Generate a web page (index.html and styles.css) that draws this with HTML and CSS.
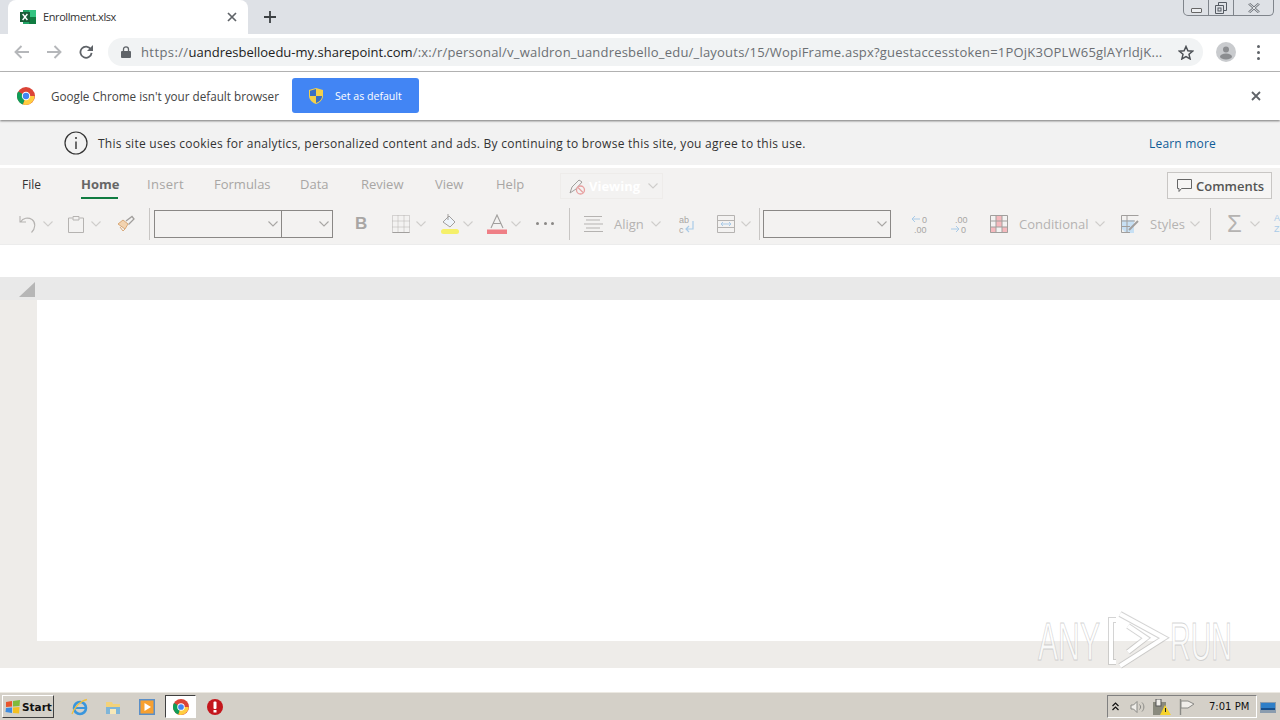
FILE: index.html
```html
<!DOCTYPE html>
<html lang="en">
<head>
    <meta charset="UTF-8">
    <title>Enrollment.xlsx</title>
    <link rel="stylesheet" href="styles.css">
</head>
<body>
    <svg class="defs" width="0" height="0">
        <symbol id="chev" viewBox="0 0 10 6"><path d="M.5.5 5 5 9.5.5" fill="none" stroke="#cfcdcb" stroke-width="1.100"/></symbol>
        <symbol id="chevd" viewBox="0 0 10 6"><path d="M.5.5 5 5 9.5.5" fill="none" stroke="#a8a6a4" stroke-width="1.100"/></symbol>
    </svg>

    <div class="tabstrip">
        <div class="tab">
            <svg class="tab-icon" width="16" height="16" viewBox="0 0 16 16"><rect x="3" y="1" width="13" height="14" fill="#21a366"/><rect x="9" y="1" width="7" height="7" fill="#33c481"/><rect x="9" y="8" width="7" height="7" fill="#107c41"/><rect y="3" width="10" height="10" fill="#185c37"/><path d="M2.600 5 7.400 11M7.400 5 2.600 11" stroke="#fff" stroke-width="1.400"/></svg>
            <span class="tab-title">Enrollment.xlsx</span>
            <svg width="10" height="10" viewBox="0 0 10 10"><path d="M1 1 9 9M9 1 1 9" stroke="#5f6368" stroke-width="1.700"/></svg>
        </div>
        <svg class="newtab" width="12" height="12" viewBox="0 0 12 12"><path d="M6 0V12M0 6H12" stroke="#3c4043" stroke-width="1.800"/></svg>
        <div class="winctl">
            <div class="win-btn win-min"><span class="min-bar"></span></div>
            <div class="win-btn win-max">
                <svg width="12" height="12" viewBox="0 0 12 12"><path d="M3.500 3V.5H11.500V8.500H9M.5 3.500H8.500V11.500H.5Z" fill="none" stroke="#555b63"/><rect x="3" y="6" width="3" height="3" fill="none" stroke="#555b63"/></svg>
            </div>
            <div class="win-btn win-close">
                <svg width="12" height="10" viewBox="0 0 12 10"><path d="M1 .5 11 9.500M11 .5 1 9.500" stroke="#70757c" stroke-width="2.400"/><path d="M1 .5 11 9.500M11 .5 1 9.500" stroke="#e6e8ec" stroke-width="1"/></svg>
            </div>
        </div>
    </div>

    <div class="toolbar">
        <svg class="nav-back" width="16" height="14" viewBox="0 0 16 14"><path d="M15 7H2M7.500 1 1.500 7l6 6" fill="none" stroke="#b5b7ba" stroke-width="1.900"/></svg>
        <svg class="nav-fwd" width="16" height="14" viewBox="0 0 16 14"><path d="M1 7H14M8.500 1l6 6-6 6" fill="none" stroke="#b5b7ba" stroke-width="1.900"/></svg>
        <svg class="nav-reload" width="14" height="14" viewBox="0 0 14 14"><path d="M11.800 4.200A5.600 5.600 0 1 0 12.600 7.800" fill="none" stroke="#5f6368" stroke-width="1.800"/><path d="M14 0V6H8Z" fill="#5f6368"/></svg>
        <div class="omnibox">
            <svg class="lock" width="10" height="12" viewBox="0 0 10 12"><path d="M2.500 5V3.300a2.500 2.500 0 0 1 5 0V5" fill="none" stroke="#5f6368" stroke-width="1.300"/><rect y="5" width="10" height="7" rx="1" fill="#5f6368"/></svg>
            <div class="url"><span class="url-scheme">https://</span><span class="url-host">uandresbelloedu-my.sharepoint.com</span><span class="url-dim">/:x:/r/personal/v_waldron_uandresbello_edu/_layouts/15/WopiFrame.aspx?guestaccesstoken=1POjK3OPLW65glAYrldjK...</span></div>
            <svg class="star" width="16" height="15" viewBox="0 0 16 15"><path d="M8 1.500 9.900 5.800 14.600 6.200 11 9.300 12.100 13.900 8 11.500 3.900 13.900 5 9.300 1.400 6.200 6.100 5.800Z" fill="none" stroke="#4c5055" stroke-width="1.500"/></svg>
        </div>
        <svg class="avatar" width="20" height="20" viewBox="0 0 20 20"><circle cx="10" cy="10" r="10" fill="#c9cbce"/><circle cx="10" cy="7.500" r="3" fill="#8b8d90"/><ellipse cx="10" cy="14.500" rx="6" ry="3" fill="#8b8d90"/></svg>
        <div class="kebab"><i></i><i></i><i></i></div>
    </div>

    <div class="infobar">
        <svg class="chrome-logo" width="18" height="18" viewBox="0 0 18 18"><circle cx="9" cy="9" r="9" fill="#db4437"/><path d="M9 9 1.200 4.500A9 9 0 0 0 6 17.500Z" fill="#0f9d58"/><path d="M9 9H17.600A9 9 0 0 1 6 17.500Z" fill="#ffcd40"/><circle cx="9" cy="9" r="4.200" fill="#fff"/><circle cx="9" cy="9" r="3.200" fill="#4285f4"/></svg>
        <span class="infobar-text">Google Chrome isn't your default browser</span>
        <div class="default-btn">
            <svg width="14" height="16" viewBox="0 0 14 16"><path d="M7 0 14 2V8C14 12 10 15 7 16 4 15 0 12 0 8V2Z" fill="#f4d04a"/><path d="M7 1V8H1V2.700ZM7 8H13C13 11.500 10 14 7 15Z" fill="#3a6fc4"/></svg>
            <span>Set as default</span>
        </div>
        <svg class="infobar-close" width="10" height="10" viewBox="0 0 10 10"><path d="M1 1 9 9M9 1 1 9" stroke="#5f6368" stroke-width="1.800"/></svg>
    </div>

    <div class="cookiebar">
        <svg width="24" height="24" viewBox="0 0 24 24"><circle cx="12" cy="12" r="11" fill="none" stroke="#333" stroke-width="1.200"/><path d="M12 10.500V18" stroke="#333" stroke-width="1.400"/><circle cx="12" cy="7" r="1" fill="#333"/></svg>
        <span class="cookie-text">This site uses cookies for analytics, personalized content and ads. By continuing to browse this site, you agree to this use.</span>
        <span class="learn-more">Learn more</span>
    </div>

    <div class="ribbon">
        <div class="ribbon-tabs">
            <span class="rtab rtab-file">File</span>
            <span class="rtab rtab-home">Home</span>
            <span class="rtab rtab-insert">Insert</span>
            <span class="rtab rtab-formulas">Formulas</span>
            <span class="rtab rtab-data">Data</span>
            <span class="rtab rtab-review">Review</span>
            <span class="rtab rtab-view">View</span>
            <span class="rtab rtab-help">Help</span>
            <div class="viewing">
                <svg width="17" height="17" viewBox="0 0 17 17"><path d="M1 15 3 9 10 2 13 4 7 11Z" fill="none" stroke="#a19f9d"/><circle cx="11.500" cy="12" r="4" fill="#f3f2f1" stroke="#e8a0a0" stroke-width="1.300"/><path d="M9 9.500 14 14.500" stroke="#e8a0a0" stroke-width="1.200"/></svg>
                <span class="viewing-text">Viewing</span>
                <svg width="10" height="6"><use href="#chev"/></svg>
            </div>
            <div class="comments">
                <svg width="15" height="15" viewBox="0 0 15 15"><path d="M.5 1.500H14.500V10.500H4.500L2 13.500V10.500H.5Z" fill="none" stroke="#666"/></svg>
                <span>Comments</span>
            </div>
        </div>
        <div class="ribbon-tools">
            <svg width="18" height="20" viewBox="0 0 18 20"><path d="M1 2V8H7M1.500 8C4 4 9 3 13 5.500c4 3 3.500 9-.5 13" fill="none" stroke="#b5b3b1" stroke-width="1.100"/></svg>
            <svg class="ml6" width="10" height="6"><use href="#chev"/></svg>
            <svg class="ml15" width="16" height="18" viewBox="0 0 16 18"><path d="M4.500 3H.5V17.500H15.500V3H11.500M5 1.500H11V5H5Z" fill="none" stroke="#b5b3b1"/></svg>
            <svg class="ml7" width="10" height="6"><use href="#chev"/></svg>
            <svg class="ml16" width="18" height="18" viewBox="0 0 18 18"><path d="M1 9 8 14 11 9 6 5Z" fill="#f2d3b0" stroke="#d8a878"/><path d="M9 6 15 1.500 17 4 11.500 9.500" fill="none" stroke="#a19f9d" stroke-width="1.300"/><path d="M3 12 6 16 8 14" fill="none" stroke="#d8a878"/></svg>
            <span class="sep ml14"></span>
            <div class="combo combo-font ml4"><svg width="10" height="6"><use href="#chevd"/></svg></div>
            <div class="combo combo-size"><svg width="10" height="6"><use href="#chevd"/></svg></div>
            <span class="bold-b ml22">B</span>
            <svg class="ml25" width="18" height="18" viewBox="0 0 18 18"><path d="M.5.5H17.500V17.500H.5ZM6 .5V17.500M12 .5V17.500M.5 6H17.500M.5 12H17.500" fill="none" stroke="#b5b3b1" stroke-dasharray="1 1"/><path d="M.5 17.500H17.500" stroke="#a19f9d"/></svg>
            <svg class="ml6" width="10" height="6"><use href="#chev"/></svg>
            <svg class="ml15" width="18" height="20" viewBox="0 0 18 20"><path d="M2 8 8 2 14 8 9 13Z" fill="#eef4fa" stroke="#a19f9d"/><path d="M7 0V6" stroke="#a19f9d"/><rect y="15" width="18" height="5" rx="2.500" fill="#f5f06a"/></svg>
            <svg class="ml4" width="10" height="6"><use href="#chev"/></svg>
            <svg class="ml14" width="20" height="20" viewBox="0 0 20 20"><path d="M4 14 10 1 16 14M6.500 9.500H13.500" fill="none" stroke="#a19f9d" stroke-width="1.100"/><rect y="15.500" width="20" height="4.500" fill="#ef7f86"/></svg>
            <svg class="ml4" width="10" height="6"><use href="#chev"/></svg>
            <div class="dots ml15"><i></i><i></i><i></i></div>
            <span class="sep ml15"></span>
            <svg class="ml14" width="19" height="18" viewBox="0 0 19 18"><path d="M0 1.500H18M2 5H16M0 9H19M2 13H16M0 16.500H19" stroke="#b5b3b1"/></svg>
            <span class="tool-text text-align ml11">Align</span>
            <svg class="ml6" width="10" height="6"><use href="#chev"/></svg>
            <svg class="ml17" width="17" height="20" viewBox="0 0 17 20"><text x="1" y="8.500" class="svg-small">ab</text><text x="1" y="18.500" class="svg-small">c</text><path d="M15 7V15H8M11 12 8 15 11 18" fill="none" stroke="#a9cbe8" stroke-width="1.200"/></svg>
            <svg class="ml22" width="18" height="18" viewBox="0 0 18 18"><path d="M.5.5H17.500V17.500H.5ZM.5 5.500H17.500M.5 12.500H17.500" fill="none" stroke="#b5b3b1"/><path d="M4 9H14M4 9 6 7M4 9 6 11M14 9 12 7M14 9 12 11" fill="none" stroke="#a9cbe8"/></svg>
            <svg class="ml6" width="10" height="6"><use href="#chev"/></svg>
            <span class="sep ml8"></span>
            <div class="combo combo-num ml3"><svg width="10" height="6"><use href="#chevd"/></svg></div>
            <svg class="ml20" width="18" height="20" viewBox="0 0 18 20"><path d="M9 5H1M4 2 1 5 4 8" fill="none" stroke="#a9cbe8"/><text x="11" y="8.500" class="svg-small">0</text><text x="3" y="18.500" class="svg-small">.00</text></svg>
            <svg class="ml21" width="19" height="20" viewBox="0 0 19 20"><text x="5" y="8.500" class="svg-small">.00</text><path d="M1 15H9M6 12 9 15 6 18" fill="none" stroke="#a9cbe8"/><text x="11" y="18.500" class="svg-small">0</text></svg>
            <svg class="ml21" width="18" height="18" viewBox="0 0 18 18"><rect x="6" y="6" width="6" height="6" fill="#f5b9bd"/><rect y="12" width="6" height="6" fill="#f5b9bd"/><rect x="12" y="12" width="6" height="6" fill="#f5b9bd"/><rect x="6" y="0" width="6" height="6" fill="#f5b9bd"/><path d="M.5.5H17.500V17.500H.5ZM6 .5V17.500M12 .5V17.500M.5 6H17.500M.5 12H17.500" fill="none" stroke="#a19f9d"/></svg>
            <span class="tool-text text-cond ml11">Conditional</span>
            <svg class="ml6" width="10" height="6"><use href="#chev"/></svg>
            <svg class="ml16" width="19" height="18" viewBox="0 0 19 18"><path d="M0 5H13V18H5L0 13Z" fill="#c7e0f4"/><path d="M.5.5H17.500M.5.5V17.500H9M.5 6H14M6 .5V17M.5 11.500H9" fill="none" stroke="#a19f9d"/><path d="M8 15 17 6" stroke="#a19f9d" stroke-width="2"/></svg>
            <span class="tool-text text-styles ml10">Styles</span>
            <svg class="ml5" width="10" height="6"><use href="#chev"/></svg>
            <span class="sep ml10"></span>
            <span class="sigma ml16">&Sigma;</span>
            <svg class="ml7" width="10" height="6"><use href="#chev"/></svg>
            <div class="sort ml14"><span>A</span><span>Z</span></div>
        </div>
    </div>

    <div class="formula-gap"></div>
    <div class="col-header">
        <div class="corner"><span class="corner-tri"></span></div>
    </div>
    <div class="sheet">
        <div class="row-header"></div>
        <div class="cells"></div>
    </div>
    <div class="sheet-tabs"></div>
    <div class="status-gap"></div>

    <div class="taskbar">
        <div class="start">
            <svg width="16" height="16" viewBox="0 0 16 16"><path d="M1 3 7 2V7.500L1 8Z" fill="#e8552d"/><path d="M8 2 15 1 14.500 7 8 7.500Z" fill="#7fba3c"/><path d="M1 9 7 8.500V14L.5 13Z" fill="#3d8be0"/><path d="M8 8.500 14.500 8 14 14.500 8 14Z" fill="#f4c020"/></svg>
            <span>Start</span>
        </div>
        <svg class="tb-ie" width="18" height="18" viewBox="0 0 18 18"><circle cx="9" cy="10" r="6" fill="none" stroke="#3a96dd" stroke-width="2.600"/><path d="M4 10H14" stroke="#3a96dd" stroke-width="2"/><path d="M1 16C3 10 9 3 16 1.500" fill="none" stroke="#f0c040" stroke-width="1.300"/></svg>
        <svg class="tb-folder" width="16" height="16" viewBox="0 0 16 16"><path d="M1 3H7L8 5H15V15H1Z" fill="#f3d27a"/><rect x="1" y="8" width="14" height="7" fill="#7fb5d8"/><rect x="5" y="10" width="6" height="5" fill="#f7e8b8"/></svg>
        <svg class="tb-wmp" width="16" height="16" viewBox="0 0 16 16"><rect width="16" height="16" fill="#5a8fc8"/><rect x="1.500" y="1.500" width="13" height="13" fill="#f7a030"/><path d="M5.500 4 12 8 5.500 12Z" fill="#fff"/></svg>
        <div class="tb-active">
            <svg width="16" height="16" viewBox="0 0 18 18"><circle cx="9" cy="9" r="9" fill="#db4437"/><path d="M9 9 1.200 4.500A9 9 0 0 0 6 17.500Z" fill="#0f9d58"/><path d="M9 9H17.600A9 9 0 0 1 6 17.500Z" fill="#ffcd40"/><circle cx="9" cy="9" r="4.200" fill="#fff"/><circle cx="9" cy="9" r="3.200" fill="#4285f4"/></svg>
        </div>
        <svg class="tb-red" width="16" height="16" viewBox="0 0 16 16"><circle cx="8" cy="8" r="8" fill="#c4161c"/><rect x="6.500" y="2.500" width="3" height="7.500" rx="1" fill="#fff"/><rect x="6.500" y="11" width="3" height="2.500" fill="#fff"/></svg>
        <div class="tray">
            <svg class="tray-up" width="7" height="9" viewBox="0 0 7 9"><path d="M.5 4 3.500 1 6.500 4M.5 8 3.500 5 6.500 8" fill="none" stroke="#111" stroke-width="1.200"/></svg>
            <svg class="tray-sound" width="16" height="14" viewBox="0 0 16 14"><path d="M1 5H3.500L7 1.500V12.500L3.500 9H1Z" fill="#f0eeea" stroke="#8a8a86"/><path d="M9.500 4.500C11 6 11 8 9.500 9.500M12 2.500C14.500 5 14.500 9 12 11.500" fill="none" stroke="#8a8a86"/></svg>
            <svg class="tray-net" width="18" height="16" viewBox="0 0 18 16"><rect y="3" width="13" height="13" fill="#8a8a7e"/><rect x="3" width="5" height="7" fill="#f0eeea" stroke="#555"/><path d="M12 6 18 16H7Z" fill="#f6d32d"/><path d="M12.500 9V13" stroke="#222"/></svg>
            <svg class="tray-flag" width="16" height="16" viewBox="0 0 16 16"><path d="M1.500 0V16" stroke="#8a8a86" stroke-width="1.400"/><path d="M2 2H9L15 5 9 9H2Z" fill="#f0eeea" stroke="#8a8a86"/></svg>
            <span class="clock">7:01 PM</span>
        </div>
        <svg class="show-desktop" width="16" height="11" viewBox="0 0 16 11"><rect width="16" height="11" fill="#8a9cae"/><rect x="1" y="1" width="14" height="7" fill="#2f7fc8"/><rect x="1" y="6" width="14" height="2" fill="#174f8c"/></svg>
    </div>

    <svg class="watermark" width="200" height="66" viewBox="0 0 200 66">
        <text x="2" y="52" textLength="62" lengthAdjust="spacingAndGlyphs" class="wm-text">ANY</text>
        <text x="134" y="52" textLength="62" lengthAdjust="spacingAndGlyphs" class="wm-text">RUN</text>
        <path class="wm-edge" d="M84 6 128 30 84 58M92 18 110 30 92 44M80 12H75V54H80"/>
        <path class="wm-fill" d="M84 6 128 30 84 58M92 18 110 30 92 44M80 12H75V54H80"/>
    </svg>
</body>
</html>
```

FILE: styles.css
```css
* {
    box-sizing: border-box;
}
body {
    margin: 0;
    width: 1280px;
    height: 720px;
    overflow: hidden;
    position: relative;
    background: #fff;
    font-family: "Open Sans", "Noto Sans", sans-serif;
}
svg {
    flex: none;
    display: block;
}
.defs {
    position: absolute;
}

/* chrome tab strip */
.tabstrip {
    height: 34px;
    background: #dee1e6;
    display: flex;
    align-items: center;
    padding-left: 8px;
}
.tab {
    width: 240px;
    height: 34px;
    background: #fff;
    border-radius: 8px 8px 0 0;
    display: flex;
    align-items: center;
    padding: 0 11px 0 12px;
}
.tab-title {
    flex: 1;
    margin: -1px 0 0 7px;
    font-size: 11px;
    letter-spacing: -.4px;
    color: #333;
}
.newtab {
    margin-left: 16px;
}
.winctl {
    margin-left: auto;
    margin-right: 6px;
    align-self: flex-start;
    height: 16px;
    width: 91px;
    display: flex;
    border: 1px solid #7f848b;
    border-top: none;
    border-radius: 0 0 5px 5px;
}
.win-btn {
    display: flex;
    align-items: center;
    justify-content: center;
    border-right: 1px solid #7f848b;
}
.win-min {
    width: 25px;
}
.win-max {
    width: 25px;
}
.win-close {
    flex: 1;
    border-right: none;
}
.min-bar {
    width: 11px;
    height: 5px;
    margin-top: 6px;
    border: 1px solid #666;
    border-radius: 1px;
    background: #eceef1;
}

/* address bar */
.toolbar {
    height: 38px;
    background: #fff;
    border-bottom: 1px solid #b9b9b9;
    display: flex;
    align-items: center;
    padding: 0 0 1px 14px;
}
.nav-fwd {
    margin-left: 16px;
}
.nav-reload {
    margin-left: 17px;
}
.omnibox {
    margin-left: 15px;
    width: 1095px;
    height: 28px;
    border-radius: 14px;
    background: #f1f3f4;
    display: flex;
    align-items: center;
    padding-left: 13px;
}
.url {
    width: 1023px;
    margin-left: 10px;
    flex: none;
    font-size: 13px;
    white-space: nowrap;
}
.url-scheme {
    color: #6b6f73;
    letter-spacing: .4px;
}
.url-dim {
    color: #6b6f73;
    letter-spacing: .21px;
}
.url-host {
    color: #222;
}
.star {
    margin-left: 14px;
}
.avatar {
    margin-left: 13px;
}
.kebab {
    margin-left: 21px;
    display: flex;
    flex-direction: column;
    gap: 3px;
}
.kebab i {
    width: 3px;
    height: 3px;
    background: #5f6368;
    border-radius: 50%;
}

/* default browser bar */
.infobar {
    height: 48px;
    background: #fff;
    display: flex;
    align-items: center;
    padding-left: 17px;
    box-shadow: 0 1px 2px rgba(0, 0, 0, .55);
    position: relative;
}
.infobar-text {
    margin-left: 16px;
    width: 241px;
    font-size: 11.7px;
    color: #444;
    white-space: nowrap;
}
.default-btn {
    width: 127px;
    height: 35px;
    margin-top: -1px;
    background: #4285f4;
    border-radius: 3px;
    display: flex;
    align-items: center;
    padding-left: 17px;
    color: #fff;
    font-size: 10.6px;
    gap: 12px;
}
.infobar-close {
    margin-left: auto;
    margin-right: 19px;
}

/* cookie notice */
.cookiebar {
    height: 47px;
    margin-top: 1px;
    background: #f2f2f2;
    display: flex;
    align-items: center;
    padding-left: 64px;
    font-size: 12px;
    border-bottom: 3px solid #fff;
}
.cookie-text {
    margin-left: 10px;
    width: 1051px;
    color: #333;
    letter-spacing: .26px;
    white-space: nowrap;
}
.learn-more {
    color: #0f5c97;
    letter-spacing: .2px;
}

/* excel ribbon */
.ribbon {
    height: 77px;
    background: #f3f2f1;
    border-bottom: 1px solid #ececec;
    overflow: hidden;
}
.ribbon-tabs {
    height: 36px;
    display: flex;
    align-items: flex-start;
    position: relative;
    font-size: 13px;
}
.rtab {
    color: #a8a6a4;
    margin-top: 7px;
    line-height: 18px;
    flex: none;
}
.rtab-file {
    color: #333;
    margin-left: 22px;
    margin-top: 8px;
    width: 59px;
    font-size: 12px;
}
.rtab-home {
    color: #666;
    font-weight: 700;
    width: 37px;
    height: 24px;
    border-bottom: 2px solid #107c41;
    margin-right: 29px;
}
.rtab-insert {
    width: 67px;
    letter-spacing: .3px;
}
.rtab-formulas {
    width: 86px;
}
.rtab-data {
    width: 61px;
}
.rtab-review {
    width: 74px;
}
.rtab-view {
    width: 61px;
}
.rtab-help {
    width: 64px;
}
.viewing {
    margin-top: 5px;
    width: 103px;
    height: 26px;
    border: 1px solid #eeecea;
    display: flex;
    align-items: center;
    padding-left: 8px;
    flex: none;
}
.viewing-text {
    color: #fff;
    font-weight: 700;
    font-size: 13px;
    margin: 0 5px 0 3px;
    width: 54px;
}
.comments {
    position: absolute;
    right: 8px;
    top: 4px;
    width: 105px;
    height: 27px;
    border: 1px solid #c8c6c4;
    background: #f6f5f4;
    display: flex;
    align-items: center;
    padding-left: 9px;
    gap: 4px;
    color: #555;
    font-weight: 600;
    font-size: 13px;
}
.ribbon-tools {
    height: 39px;
    display: flex;
    align-items: center;
    padding-left: 19px;
    white-space: nowrap;
}
.ml3 { margin-left: 3px; }
.ml4 { margin-left: 4px; }
.ml5 { margin-left: 5px; }
.ml6 { margin-left: 6px; }
.ml7 { margin-left: 7px; }
.ml8 { margin-left: 8px; }
.ml10 { margin-left: 10px; }
.ml11 { margin-left: 11px; }
.ml14 { margin-left: 14px; }
.ml15 { margin-left: 15px; }
.ml16 { margin-left: 16px; }
.ml17 { margin-left: 17px; }
.ml20 { margin-left: 20px; }
.ml21 { margin-left: 21px; }
.ml22 { margin-left: 22px; }
.ml25 { margin-left: 25px; }
.sep {
    width: 1px;
    height: 32px;
    background: #c8c6c4;
    flex: none;
}
.combo {
    height: 28px;
    border: 1px solid #8a8886;
    display: flex;
    align-items: center;
    justify-content: flex-end;
    padding-right: 3px;
    flex: none;
}
.combo-font {
    width: 128px;
}
.combo-size {
    width: 52px;
    margin-left: -1px;
}
.combo-num {
    width: 128px;
}
.bold-b {
    width: 12px;
    font-family: "Liberation Sans", sans-serif;
    font-weight: 700;
    font-size: 17px;
    color: #a8a6a4;
    flex: none;
}
.dots {
    width: 18px;
    display: flex;
    justify-content: space-between;
    flex: none;
}
.dots i {
    width: 3px;
    height: 3px;
    border-radius: 50%;
    background: #8a8886;
}
.tool-text {
    font-size: 13px;
    color: #b5b3b1;
    flex: none;
}
.text-align {
    width: 31px;
}
.text-cond {
    width: 70px;
}
.text-styles {
    width: 35px;
}
.svg-small {
    font-family: "Liberation Sans", sans-serif;
    font-size: 9px;
    fill: #a8a6a4;
}
.sigma {
    width: 16px;
    font-size: 24px;
    line-height: 24px;
    color: #b5b3b1;
    flex: none;
    font-family: "Liberation Sans", sans-serif;
}
.sort {
    display: flex;
    flex-direction: column;
    font-family: "Liberation Sans", sans-serif;
    font-size: 9px;
    line-height: 11px;
    color: #a9cbe8;
}

/* sheet */
.formula-gap {
    height: 32px;
    background: #fff;
}
.col-header {
    height: 23px;
    background: #e9e9e9;
}
.corner {
    width: 37px;
    height: 23px;
    padding: 5px 0 0 19px;
}
.corner-tri {
    display: block;
    width: 16px;
    height: 15px;
    background: #b6b6b6;
    clip-path: polygon(100% 0, 100% 100%, 0 100%);
}
.sheet {
    height: 341px;
    display: flex;
}
.row-header {
    width: 37px;
    background: #eeece9;
}
.cells {
    flex: 1;
    background: #fff;
}
.sheet-tabs {
    height: 27px;
    background: #eeece9;
}
.status-gap {
    height: 24px;
    background: #fff;
}

/* windows taskbar */
.taskbar {
    height: 28px;
    background: #d4d0c8;
    border-top: 1px solid #ece9e2;
    display: flex;
    align-items: center;
    padding-left: 2px;
    position: relative;
}
.start {
    width: 52px;
    height: 23px;
    display: flex;
    align-items: center;
    padding-left: 2px;
    gap: 1px;
    font-family: "DejaVu Sans", sans-serif;
    font-size: 10.5px;
    font-weight: 700;
    color: #111;
    background: #d4d0c8;
    border: 1px solid;
    border-color: #fff #404040 #404040 #fff;
    flex: none;
}
.tb-ie {
    margin-left: 17px;
}
.tb-folder {
    margin-left: 16px;
}
.tb-wmp {
    margin-left: 18px;
}
.tb-active {
    margin-left: 10px;
    width: 31px;
    height: 23px;
    background: #fff;
    border: 1px solid;
    border-color: #404040 #fff #fff #404040;
    display: flex;
    align-items: center;
    justify-content: center;
}
.tb-red {
    margin-left: 11px;
}
.tray {
    margin-left: auto;
    width: 150px;
    height: 23px;
    border: 1px solid;
    border-color: #808080 #fff #fff #808080;
    display: flex;
    align-items: center;
    padding-left: 4px;
    margin-right: 23px;
}
.tray-sound {
    margin-left: 11px;
}
.tray-net {
    margin-left: 7px;
}
.tray-flag {
    margin-left: 8px;
}
.clock {
    margin-left: 14px;
    font-family: "DejaVu Sans", sans-serif;
    font-size: 10px;
    color: #111;
    white-space: nowrap;
}
.show-desktop {
    position: absolute;
    right: 4px;
    top: 9px;
}

/* watermark over the page */
.watermark {
    position: absolute;
    left: 1036px;
    top: 608px;
}
.wm-text {
    font-family: "Liberation Sans", sans-serif;
    font-size: 53px;
    fill: rgba(255, 255, 255, .7);
    stroke: rgba(170, 170, 170, .5);
    stroke-width: 1;
}
.wm-edge {
    fill: none;
    stroke: rgba(170, 170, 170, .5);
    stroke-width: 6;
}
.wm-fill {
    fill: none;
    stroke: #fff;
    stroke-width: 4;
}
```
